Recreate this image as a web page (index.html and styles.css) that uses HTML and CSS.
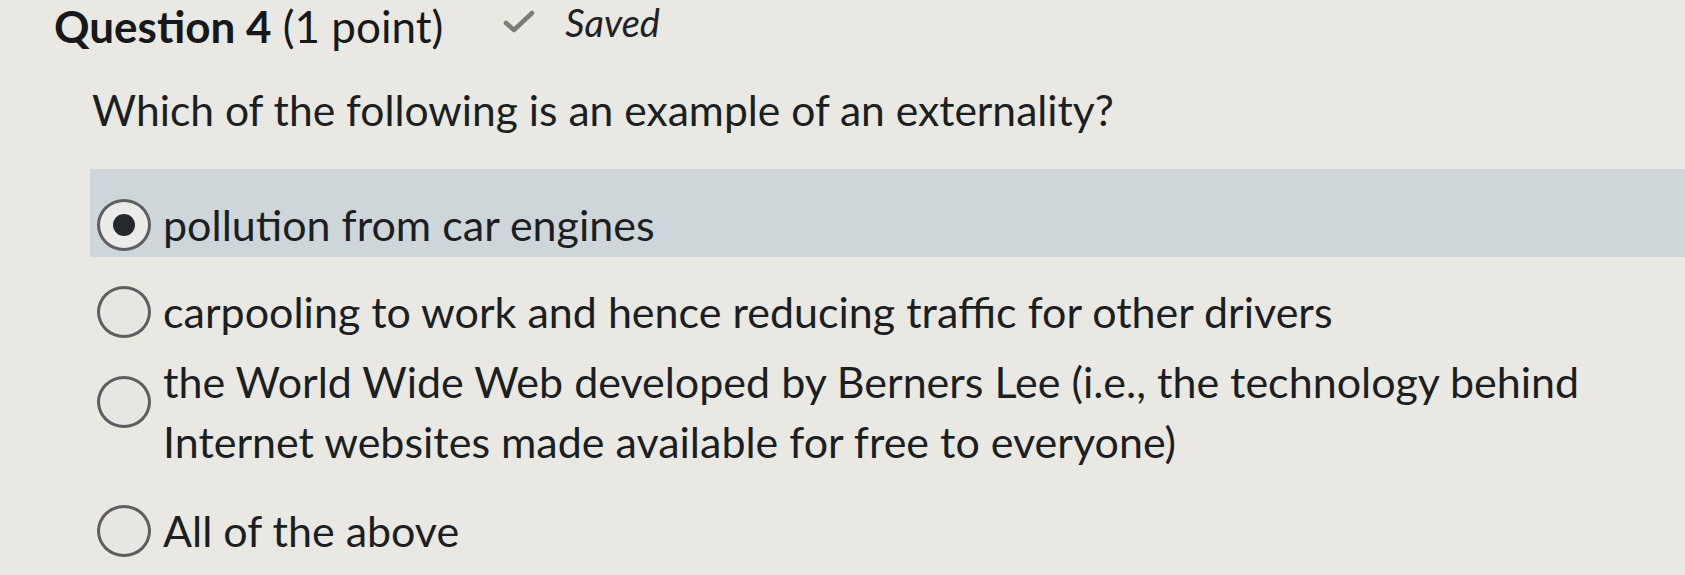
FILE: index.html
```html
<!DOCTYPE html>
<html lang="en">
<head>
<meta charset="utf-8">
<title>Question 4</title>
<link rel="stylesheet" href="styles.css">
</head>
<body>
<main class="page">
  <header class="q-header">
    <h1 class="q-title"><span class="q-num">Question 4</span> <span class="q-points">(1 point)</span></h1>
    <span class="saved">
      <svg class="check" viewBox="0 0 32 24" aria-hidden="true"><path d="M3 13 L11 20 L29 3" fill="none" stroke="#7b7c7c" stroke-width="4.5" stroke-linecap="round" stroke-linejoin="round"/></svg>
      <span class="saved-text">Saved</span>
    </span>
  </header>
  <p class="q-text">Which of the following is an example of an externality?</p>
  <div class="options">
    <label class="option selected">
      <span class="radio"><span class="dot"></span></span>
      <span class="label">pollution from car engines</span>
    </label>
    <label class="option">
      <span class="radio"></span>
      <span class="label">carpooling to work and hence reducing traffic for other drivers</span>
    </label>
    <label class="option multi">
      <span class="radio"></span>
      <span class="label">the World Wide Web developed by Berners Lee (i.e., the technology behind<br>Internet websites made available for free to everyone)</span>
    </label>
    <label class="option last">
      <span class="radio"></span>
      <span class="label">All of the above</span>
    </label>
  </div>
</main>
</body>
</html>
```
FILE: styles.css
```css
html, body {
  margin: 0;
  padding: 0;
}
body {
  background: #e9e8e3;
  color: #1c1f22;
  font-family: Lato, "Open Sans", sans-serif;
  width: 1685px;
  height: 575px;
  overflow: hidden;
}
.page {
  padding: 2px 0 0 54px;
}
.q-header {
  display: flex;
  align-items: flex-start;
  height: 48px;
  line-height: 48px;
}
.q-title {
  margin: 0;
  font-size: 44px;
  font-weight: 400;
  color: #16181a;
}
.q-num {
  font-weight: 700;
}
.saved {
  display: flex;
  align-items: center;
  height: 40px;
  line-height: 40px;
  margin-left: 60px;
}
.check {
  width: 32px;
  height: 24px;
}
.saved-text {
  font-style: italic;
  font-size: 38px;
  margin-left: 30px;
  color: #1f2124;
}
.q-text {
  margin: 35px 0 0 38px;
  font-size: 42.6px;
  line-height: 50px;
}
.options {
  margin: 34px 0 0 36px;
  display: flex;
  flex-direction: column;
  gap: 25px;
}
.option {
  display: flex;
  align-items: center;
  padding-left: 7px;
  font-size: 43px;
  line-height: 60px;
}
.option.selected {
  background: #ced6d9;
  padding-top: 26px;
  padding-bottom: 2px;
}
.option.multi {
  margin-top: -15px;
}
.option.last {
  margin-top: 4px;
}
.radio {
  flex: none;
  width: 48px;
  height: 46px;
  border: 3px solid #5d5e5f;
  border-radius: 50%;
  background: #e6e6e3;
  display: flex;
  align-items: center;
  justify-content: center;
  margin-right: 12px;
}
.option.selected .radio {
  background: #ebebea;
}
.option.multi .radio {
  margin-bottom: 20px;
}
.dot {
  width: 22px;
  height: 22px;
  border-radius: 50%;
  background: #25292b;
}
.label {
  color: #1c1f22;
}
```
